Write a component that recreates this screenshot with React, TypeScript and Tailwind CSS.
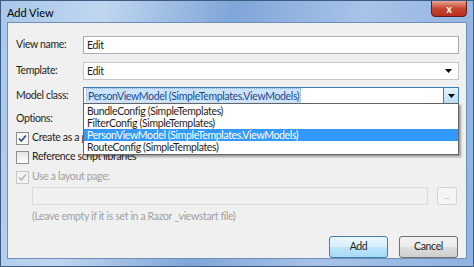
const font = "font-['Lato','Noto_Sans',sans-serif]";

const Arrow = ({ color = "#000" }: { color?: string }) => (
  <svg width="7" height="4" viewBox="0 0 7 4">
    <path d="M0 0h7L3.5 4z" fill={color} />
  </svg>
);

const Check = ({ color }: { color: string }) => (
  <svg width="9" height="9" viewBox="0 0 9 9">
    <path d="M1 4.5l2.3 2.5L8 1.5" stroke={color} strokeWidth="1.6" fill="none" />
  </svg>
);

const options = [
  "BundleConfig (SimpleTemplates)",
  "FilterConfig (SimpleTemplates)",
  "PersonViewModel (SimpleTemplates.ViewModels)",
  "RouteConfig (SimpleTemplates)",
];

export default function App() {
  return (
    <div
      className={`w-[474px] h-[267px] flex flex-col overflow-hidden text-[10.5px] tracking-[-0.35px] text-[#1e1e1e] bg-[linear-gradient(100deg,#a9c7ea_0%,#c0d6f0_20%,#7fa6d8_45%,#a7c3e8_70%,#8fb2e0_100%)] border border-[#3e5b82] ${font}`}
    >
      {/* title bar */}
      <div className="h-[22px] flex items-start justify-between pl-[6px] pr-[6px]">
        <span className="mt-[4px] text-[11px] tracking-normal text-black">Add View</span>
        <div className="w-[36px] h-[17px] -mt-px rounded-b-[4px] border border-[#5a1e1e] bg-[linear-gradient(#e8a595,#c7452e_50%,#b8311c)] flex items-center justify-center">
          <span className="text-white text-[11px] font-bold leading-none">x</span>
        </div>
      </div>

      {/* client area */}
      <div className="relative mx-[6px] mb-[7px] flex-1 bg-[#f0f0f0] border border-[#6e8fb8] pt-[13px] pl-[8px] pr-[7px] flex flex-col">
        <div className="flex items-center h-[18px]">
          <span className="w-[67px] whitespace-nowrap">View name:</span>
          <div className="flex-1 h-[18px] bg-white border border-[#abadb3] pl-[3px] leading-[16px]">Edit</div>
        </div>
        <div className="flex items-center h-[18px] mt-[8px]">
          <span className="w-[67px] whitespace-nowrap">Template:</span>
          <div className="flex-1 h-[18px] bg-white border border-[#c5c5c5] pl-[3px] pr-[6px] leading-[16px] flex items-center justify-between">
            <span>Edit</span>
            <Arrow />
          </div>
        </div>
        <div className="flex items-center h-[18px] mt-[7px]">
          <span className="w-[67px] whitespace-nowrap">Model class:</span>
          <div className="flex-1 h-[18px] bg-white border border-[#3c7fb1] pl-[2px] flex items-center justify-between">
            <span className="bg-[#cde3fb] text-[#1b4a8c] px-px leading-[14px] border border-dotted border-[#8fb4e0]">
              PersonViewModel (SimpleTemplates.ViewModels)
            </span>
            <div className="w-[15px] h-[16px] border-l border-[#3c7fb1] bg-[linear-gradient(#e5f4fc,#b4dcf3)] flex items-center justify-center">
              <Arrow />
            </div>
          </div>
        </div>

        <div className="mt-[6px] h-[14px] leading-[14px]">Options:</div>

        <div className="mt-[6px] h-[14px] flex items-center gap-[3px]">
          <div className="w-[13px] h-[13px] border border-[#8e8f8f] bg-[linear-gradient(#f4f4f4,#fdfdfd)] flex items-center justify-center">
            <Check color="#2a4a7a" />
          </div>
          <span>Create as a partial view</span>
        </div>
        <div className="mt-[5px] h-[14px] flex items-center gap-[3px]">
          <div className="w-[13px] h-[13px] border border-[#8e8f8f] bg-[linear-gradient(#e4e4e4,#fdfdfd)]" />
          <span>Reference script libraries</span>
        </div>
        <div className="mt-[6px] h-[14px] flex items-center gap-[3px] text-[#a0a0a0]">
          <div className="w-[13px] h-[13px] border border-[#c8c8c8] bg-[#f4f4f4] flex items-center justify-center">
            <Check color="#b8b8b8" />
          </div>
          <span>Use a layout page:</span>
        </div>
        <div className="mt-[3px] ml-[16px] flex items-center gap-[9px]">
          <div className="flex-1 h-[18px] border border-[#d9d9d9] bg-[#f0f0f0]" />
          <div className="w-[20px] h-[18px] mr-[2px] border border-[#d5d5d5] rounded-[2px] bg-[#f4f4f4] text-[#b0b0b0] text-[8px] flex items-center justify-center">
            ...
          </div>
        </div>
        <div className="mt-[4px] ml-[16px] h-[14px] leading-[14px] text-[#a0a0a0]">
          (Leave empty if it is set in a Razor _viewstart file)
        </div>

        <div className="mt-[13px] flex justify-end gap-[11px] pr-[1px]">
          <button className="w-[59px] h-[22px] rounded-[3px] border border-[#3c7fb1] bg-[linear-gradient(#eaf6fd,#d9f0fc_50%,#bee6fd_51%,#a7d9f5)]">
            Add
          </button>
          <button className="w-[59px] h-[22px] rounded-[3px] border border-[#707070] bg-[linear-gradient(#f2f2f2,#ebebeb_50%,#dddddd_51%,#cfcfcf)]">
            Cancel
          </button>
        </div>

        {/* open dropdown */}
        <div className="absolute left-[75px] right-[7px] top-[80px] bg-white border border-[#646464] shadow-[2px_2px_2px_rgba(0,0,0,0.35)] py-px">
          {options.map((o, i) => (
            <div
              key={o}
              className={`h-[12px] leading-[12px] pl-[3px] ${i === 2 ? "bg-[#3399ff] text-white" : ""}`}
            >
              {o}
            </div>
          ))}
        </div>
      </div>
    </div>
  );
}
